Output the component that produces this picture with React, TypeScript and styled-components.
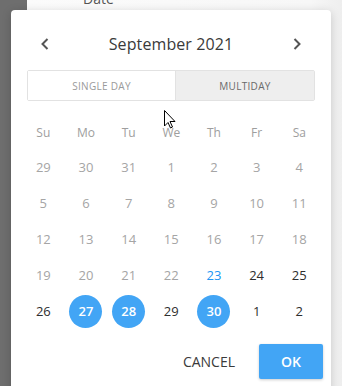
import React, { useState } from 'react'
import styled, { createGlobalStyle } from 'styled-components'

const GlobalStyle = createGlobalStyle`
  html, body {
    margin: 0;
    padding: 0;
    width: 342px;
    height: 386px;
    overflow: hidden;
    background: #f2f2f2;
    font-family: 'Open Sans', 'Liberation Sans', sans-serif;
  }
`

const Screen = styled.div`
  position: relative;
  width: 342px;
  height: 386px;
  display: flex;
  background: #6e6e6e;
  overflow: hidden;
`

const BackPanel = styled.div`
  margin-left: 27px;
  flex: 1;
  background: linear-gradient(90deg, #fbfbfb 0%, #f7f7f7 90%, #eeeeee 100%);
  padding-left: 56px;
  color: #555;
  font-size: 14px;
  line-height: 1;
  margin-top: -8px;
`

const Dialog = styled.div`
  position: absolute;
  left: 11px;
  top: 10px;
  width: 320px;
  height: 400px;
  background: #fff;
  border-radius: 4px;
  box-shadow: 0 2px 10px rgba(0, 0, 0, 0.18);
  display: flex;
  flex-direction: column;
  padding: 0 8px 0 11px;
  box-sizing: border-box;
`

const Header = styled.div`
  height: 60px;
  box-sizing: border-box;
  display: flex;
  align-items: center;
  justify-content: space-between;
  padding: 8px 18px 0 15px;
`

const Title = styled.div`
  font-size: 16px;
  color: #3a3a3a;
  letter-spacing: 0.1px;
`

const NavButton = styled.button`
  border: none;
  background: none;
  padding: 0;
  width: 16px;
  height: 16px;
  display: flex;
  align-items: center;
  justify-content: center;
  color: #555;
  cursor: pointer;
`

const Toggle = styled.div`
  margin: 0 8px 0 5px;
  display: grid;
  grid-template-columns: 147px 1fr;
  height: 31px;
  border: 1px solid #e2e2e2;
  border-radius: 2px;
  box-sizing: border-box;
`

const ToggleOption = styled.div<{ $active?: boolean }>`
  display: flex;
  align-items: center;
  justify-content: center;
  font-size: 10px;
  letter-spacing: 0.3px;
  text-transform: uppercase;
  background: ${p => (p.$active ? '#eeeeee' : '#ffffff')};
  color: ${p => (p.$active ? '#6a6a6a' : '#9a9a9a')};
  border-left: ${p => (p.$active ? '1px solid #e2e2e2' : 'none')};
`

const Grid = styled.div`
  margin-top: 14px;
  display: grid;
  grid-template-columns: repeat(7, 42.67px);
  grid-template-rows: 34px;
  grid-auto-rows: 36px;
`

const WeekDay = styled.div`
  display: flex;
  align-items: center;
  justify-content: center;
  font-size: 12px;
  color: #9e9e9e;
`

const Day = styled.div`
  display: flex;
  align-items: center;
  justify-content: center;
`

const DayInner = styled.div<{ $tone: Tone }>`
  width: 33px;
  height: 33px;
  border-radius: 50%;
  display: flex;
  align-items: center;
  justify-content: center;
  font-size: 13px;
  font-weight: ${p => (p.$tone === 'selected' ? 600 : 400)};
  background: ${p => (p.$tone === 'selected' ? '#42a5f5' : 'transparent')};
  color: ${p =>
    p.$tone === 'selected' ? '#ffffff' : p.$tone === 'today' ? '#2196f3' : p.$tone === 'muted' ? '#a5a5a5' : '#2e2e2e'};
`

const Actions = styled.div`
  margin-top: 15px;
  display: flex;
  justify-content: flex-end;
  align-items: center;
  gap: 16px;
`

const TextButton = styled.button`
  border: none;
  background: none;
  font-family: inherit;
  font-size: 14px;
  color: #3a3a3a;
  padding: 0 8px;
  height: 35px;
  cursor: pointer;
`

const PrimaryButton = styled.button`
  border: none;
  border-radius: 2px;
  background: #42a5f5;
  color: #fff;
  font-family: inherit;
  font-size: 14px;
  font-weight: 600;
  width: 64px;
  height: 35px;
  box-shadow: 0 1px 3px rgba(0, 0, 0, 0.2);
  cursor: pointer;
`

const Cursor = styled.svg`
  position: absolute;
  left: 164px;
  top: 110px;
`

type Tone = 'muted' | 'normal' | 'today' | 'selected'

const weekDays = ['Su', 'Mo', 'Tu', 'We', 'Th', 'Fr', 'Sa']
const days = [29, 30, 31, ...Array.from({ length: 30 }, (_, i) => i + 1), 1, 2]

const toneOf = (index: number, value: number, selected: number[]): Tone => {
  const inMonth = index >= 3 && index < 33
  if (inMonth && selected.includes(value)) return 'selected'
  if (inMonth && value === 23) return 'today'
  if (index < 3 || (inMonth && value < 23)) return 'muted'
  return 'normal'
}

const App: React.FC = () => {
  const [mode, setMode] = useState<'single' | 'multi'>('multi')
  const [selected, setSelected] = useState<number[]>([27, 28, 30])

  return (
    <>
      <GlobalStyle />
      <Screen>
        <BackPanel>Date</BackPanel>
        <Dialog>
          <Header>
            <NavButton aria-label="previous">
              <svg width="10" height="14" viewBox="0 0 10 14">
                <path d="M7.5 2 L2.5 7 L7.5 12" fill="none" stroke="currentColor" strokeWidth="2" />
              </svg>
            </NavButton>
            <Title>September 2021</Title>
            <NavButton aria-label="next">
              <svg width="10" height="14" viewBox="0 0 10 14">
                <path d="M2.5 2 L7.5 7 L2.5 12" fill="none" stroke="currentColor" strokeWidth="2" />
              </svg>
            </NavButton>
          </Header>

          <Toggle>
            <ToggleOption $active={mode === 'single'} onClick={() => setMode('single')}>
              Single day
            </ToggleOption>
            <ToggleOption $active={mode === 'multi'} onClick={() => setMode('multi')}>
              Multiday
            </ToggleOption>
          </Toggle>

          <Grid>
            {weekDays.map(w => (
              <WeekDay key={w}>{w}</WeekDay>
            ))}
            {days.map((d, i) => {
              const tone = toneOf(i, d, selected)
              return (
                <Day
                  key={i}
                  onClick={() => {
                    if (tone === 'muted') return
                    setSelected(s => (s.includes(d) ? s.filter(x => x !== d) : [...s, d]))
                  }}
                >
                  <DayInner $tone={tone}>{d}</DayInner>
                </Day>
              )
            })}
          </Grid>

          <Actions>
            <TextButton>CANCEL</TextButton>
            <PrimaryButton>OK</PrimaryButton>
          </Actions>
        </Dialog>

        <Cursor width="12" height="19" viewBox="0 0 12 19">
          <path d="M0.5 0.5 L0.5 16 L4 12.5 L6.5 18 L8.5 17 L6 11.5 L11 11.5 Z" fill="#fff" stroke="#000" strokeWidth="1" />
        </Cursor>
      </Screen>
    </>
  )
}

export default App
